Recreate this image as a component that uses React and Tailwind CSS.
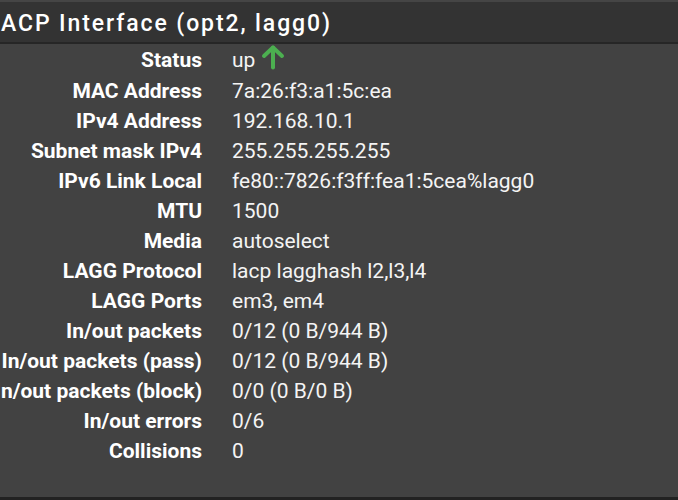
import React from "react";

const rows = [
  ["MAC Address", "7a:26:f3:a1:5c:ea"],
  ["IPv4 Address", "192.168.10.1"],
  ["Subnet mask IPv4", "255.255.255.255"],
  ["IPv6 Link Local", "fe80::7826:f3ff:fea1:5cea%lagg0"],
  ["MTU", "1500"],
  ["Media", "autoselect"],
  ["LAGG Protocol", "lacp lagghash l2,l3,l4"],
  ["LAGG Ports", "em3, em4"],
  ["In/out packets", "0/12 (0 B/944 B)"],
  ["In/out packets (pass)", "0/12 (0 B/944 B)"],
  ["In/out packets (block)", "0/0 (0 B/0 B)"],
  ["In/out errors", "0/6"],
  ["Collisions", "0"],
];

function Row({ label, children, tall }) {
  return (
    <div className={`flex items-center ${tall ? "h-[32px]" : "h-[30px]"}`}>
      <div className="w-[202px] shrink-0 font-bold text-white whitespace-nowrap flex justify-end">
        <span>{label}</span>
      </div>
      <div className="pl-[30px] text-[#f4f4f4] whitespace-nowrap flex items-center">
        {children}
      </div>
    </div>
  );
}

export default function App() {
  return (
    <div
      className="w-[678px] h-[500px] overflow-hidden bg-[#424242] flex flex-col"
      style={{ fontFamily: "Roboto, 'Liberation Sans', sans-serif" }}
    >
      <div className="h-[2px] bg-[#454545]" />
      <div className="h-[40px] bg-[#333333] flex items-center pl-[1px] border-b-2 border-[#262626] box-content">
        <h2 className="mt-[2px] text-[23px] font-medium tracking-[1.9px] text-white leading-none whitespace-nowrap">
          ACP Interface (opt2, lagg0)
        </h2>
      </div>
      <div className="flex-1 text-[21px] leading-none overflow-hidden">
        <div className="flex flex-col">
          <Row label="Status" tall>
            <span>up</span>
            <svg
              width="24"
              height="26"
              viewBox="0 0 24 26"
              className="ml-[6px] -mt-[6px]"
              fill="none"
              stroke="#4caf50"
              strokeWidth="4"
              strokeLinecap="round"
              strokeLinejoin="round"
            >
              <path d="M12 23.5V3.5" />
              <path d="M3 12L12 3.5L21 12" />
            </svg>
          </Row>
          {rows.map(([l, v]) => (
            <Row key={l} label={l}>
              {v}
            </Row>
          ))}
        </div>
      </div>
      <div className="h-[3px] bg-[#222222]" />
    </div>
  );
}
